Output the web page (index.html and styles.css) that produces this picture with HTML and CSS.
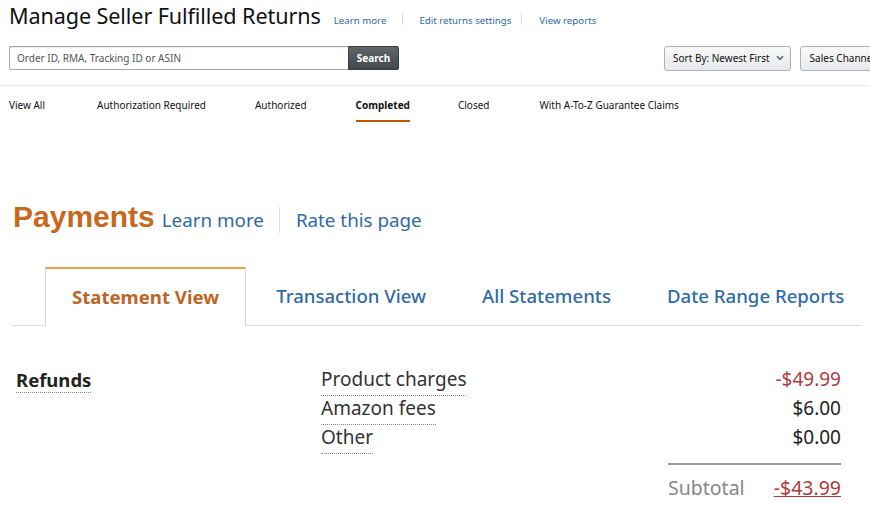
FILE: index.html
```html
<!DOCTYPE html>
<html>
<head>
<meta charset="utf-8">
<link rel="stylesheet" href="styles.css">
</head>
<body>
<div class="returns">
  <div class="title-row">
    <h1 class="title">Manage Seller Fulfilled Returns</h1>
    <a class="hlink">Learn more</a>
    <span class="hsep"></span>
    <a class="hlink">Edit returns settings</a>
    <span class="hsep tight"></span>
    <a class="hlink">View reports</a>
  </div>
  <div class="search-row">
    <div class="search-box">Order ID, RMA, Tracking ID or ASIN</div>
    <button class="search-btn">Search</button>
    <button class="drop-btn sort">Sort By: Newest First
      <svg class="chev" width="8" height="6" viewBox="0 0 8 6"><path d="M1 1.2 L4 4.2 L7 1.2" fill="none" stroke="#555" stroke-width="1.5"/></svg>
    </button>
    <button class="drop-btn sales">Sales Channel</button>
  </div>
  <div class="status-tabs">
    <span class="stab">View All</span>
    <span class="stab">Authorization Required</span>
    <span class="stab">Authorized</span>
    <span class="stab active">Completed</span>
    <span class="stab">Closed</span>
    <span class="stab">With A-To-Z Guarantee Claims</span>
  </div>
</div>

<div class="payments">
  <div class="pay-head">
    <h2 class="pay-title">Payments</h2>
    <a class="plink">Learn more</a>
    <span class="psep"></span>
    <a class="plink">Rate this page</a>
  </div>
  <div class="pay-tabs">
    <span class="ptab active">Statement View</span>
    <span class="ptab">Transaction View</span>
    <span class="ptab">All Statements</span>
    <span class="ptab">Date Range Reports</span>
  </div>
  <div class="statement">
    <div class="cat"><span class="dotted bold">Refunds</span></div>
    <div class="lines">
      <div class="line"><span class="dotted">Product charges</span><span class="amt neg">-$49.99</span></div>
      <div class="line"><span class="dotted">Amazon fees</span><span class="amt">$6.00</span></div>
      <div class="line"><span class="dotted">Other</span><span class="amt">$0.00</span></div>
      <div class="subtotal">
        <span class="sub-label">Subtotal</span>
        <span class="sub-amt">-$43.99</span>
      </div>
    </div>
  </div>
</div>
</body>
</html>
```
FILE: styles.css
```css
html, body {
  margin: 0;
  padding: 0;
  background: #fff;
  overflow: hidden;
}
body {
  width: 870px;
  height: 506px;
  font-family: "Noto Sans", "Open Sans", sans-serif;
  color: #111;
}
a { cursor: pointer; }

.returns {
  padding: 0 0 0 9px;
}
.title-row {
  display: flex;
  align-items: baseline;
  height: 34px;
}
.title {
  margin: 0;
  font-weight: 400;
  font-size: 21.6px;
  line-height: 32px;
  color: #111;
  margin-right: 13px;
  letter-spacing: -0.1px;
}
.hlink {
  font-size: 9.7px;
  color: #2e6aa6;
}
.hsep {
  width: 1px;
  height: 12px;
  background: #ddd;
  margin: 0 16px;
  align-self: center;
  margin-top: 4px;
}
.hsep.tight {
  margin-left: 10px;
  margin-right: 17px;
}
.search-row {
  display: flex;
  align-items: center;
  margin-top: 12px;
  height: 24px;
  padding-bottom: 15px;
  border-bottom: 1px solid #e8e8e8;
  margin-left: -9px;
  padding-left: 9px;
  overflow: hidden;
}
.search-box {
  flex-shrink: 0;
  width: 331px;
  height: 22px;
  border: 1px solid #a9a9a9;
  border-right: none;
  border-radius: 2px 0 0 2px;
  font-size: 10px;
  line-height: 22px;
  padding-left: 7px;
  color: #555;
  box-shadow: inset 0 1px 1px rgba(0,0,0,0.08);
}
.search-btn {
  flex-shrink: 0;
  width: 51px;
  height: 24px;
  border: 1px solid #3a3d42;
  border-radius: 0 2px 2px 0;
  background: linear-gradient(#62656a, #44474c);
  color: #fff;
  font-family: inherit;
  font-weight: 700;
  font-size: 10px;
  padding: 0;
}
.drop-btn {
  flex-shrink: 0;
  height: 25px;
  border: 1px solid #adb1b8;
  border-radius: 3px;
  background: linear-gradient(#f7f8fa, #e7e9ec);
  font-family: inherit;
  font-size: 10px;
  color: #111;
  padding: 0 9px;
  display: flex;
  align-items: center;
  gap: 6px;
  white-space: nowrap;
}
.drop-btn.sort {
  margin-left: 265px;
  padding: 0 6px 0 8px;
}
.drop-btn.sales {
  margin-left: 9px;
}
.status-tabs {
  display: flex;
  height: 37px;
  align-items: flex-start;
}
.stab {
  font-size: 10px;
  color: #111;
  padding-top: 12px;
  height: 24px;
  box-sizing: content-box;
  white-space: nowrap;
}
.stab:nth-child(1) { margin-right: 52px; }
.stab:nth-child(2) { margin-right: 49px; }
.stab:nth-child(3) { margin-right: 49px; }
.stab:nth-child(4) { margin-right: 48px; }
.stab:nth-child(5) { margin-right: 50px; }
.stab.active {
  font-weight: 700;
  border-bottom: 2px solid #c45500;
  height: 22px;
}

.payments {
  padding: 0 8px 0 13px;
  margin-top: 77px;
}
.pay-head {
  display: flex;
  align-items: baseline;
  height: 40px;
}
.pay-title {
  margin: 0;
  font-family: "Liberation Sans", Arial, sans-serif;
  font-weight: 700;
  font-size: 30px;
  color: #c7691d;
  margin-right: 7px;
}
.plink {
  font-size: 18.8px;
  color: #2f6ba6;
}
.psep {
  width: 1px;
  height: 26px;
  background: #ddd;
  margin: 0 16px 0 15px;
  align-self: center;
}
.pay-tabs {
  display: flex;
  margin-top: 27px;
  border-bottom: 1px solid #ddd;
  height: 58px;
}
.ptab {
  flex-shrink: 0;
  white-space: nowrap;
  font-size: 18.6px;
  font-weight: 500;
  color: #2f6ba6;
  padding: 0 28px;
  line-height: 58px;
}
.ptab:last-child { padding-right: 0; }
.ptab.active {
  margin-left: 32px;
  margin-right: 2px;
  padding: 0 26px;
  border: 1px solid #ddd;
  border-top: 2px solid #e5a04e;
  border-bottom: 1px solid #fff;
  background: #fff;
  color: #be6526;
  font-weight: 700;
  height: 57px;
  line-height: 56px;
  margin-bottom: -1px;
}

.statement {
  display: flex;
  margin-top: 41px;
  padding-left: 3px;
}
.cat {
  width: 305px;
}
.dotted {
  border-bottom: 1px dotted #888;
  font-size: 19px;
  color: #333;
  line-height: 25px;
}
.bold { font-weight: 700; color: #222; font-size: 18.5px; }
.lines {
  width: 520px;
  display: flex;
  flex-direction: column;
}
.line {
  display: flex;
  justify-content: space-between;
  height: 29px;
}
.amt {
  font-size: 19px;
  color: #222;
  line-height: 25px;
}
.amt.neg { color: #b23a3c; }
.subtotal {
  align-self: flex-end;
  width: 173px;
  margin-top: 9px;
  border-top: 2px solid #999;
  display: flex;
  justify-content: space-between;
  padding-top: 9px;
}
.sub-label {
  font-size: 19.5px;
  color: #888;
}
.sub-amt {
  font-size: 19.5px;
  color: #b23a3c;
  text-decoration: underline;
}
```
